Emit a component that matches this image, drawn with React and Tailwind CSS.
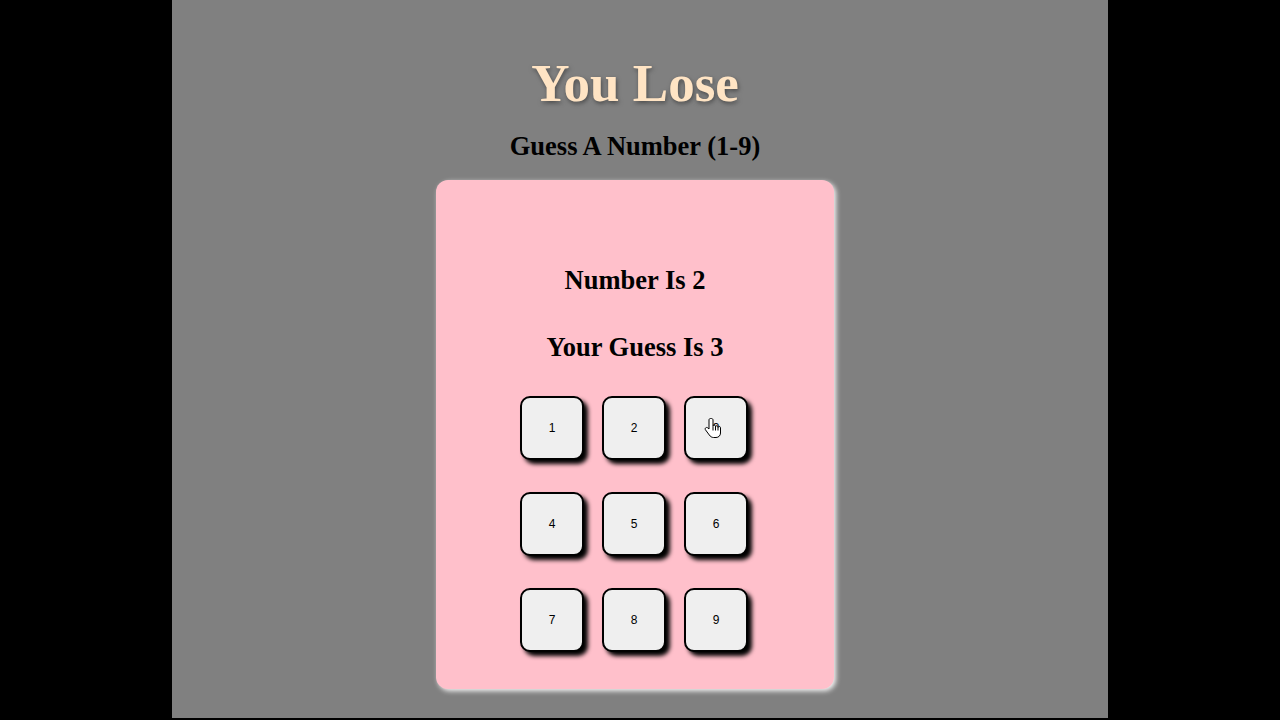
import React from "react";

function HandCursor() {
  return (
    <svg width="18" height="22" viewBox="0 0 18 22" className="absolute left-[532px] top-[417px]">
      <path
        d="M6.5 1.5C5.6 1.5 5 2.1 5 3V12L3.8 10.9C3.1 10.3 2 10.3 1.5 11C1 11.6 1.1 12.4 1.6 13L5.3 18C6.3 19.5 7.8 20.5 9.6 20.5H12C14.6 20.5 16.5 18.6 16.5 16V10.8C16.5 10 15.9 9.4 15.2 9.4C14.5 9.4 14 10 14 10.7V10C14 9.2 13.4 8.7 12.7 8.7C12 8.7 11.5 9.2 11.5 10V9.4C11.5 8.6 10.9 8.1 10.2 8.1C9.5 8.1 9 8.6 9 9.3V3C9 2.1 8.3 1.5 7.5 1.5Z"
        fill="#fff"
        stroke="#000"
        strokeWidth="1"
        strokeLinejoin="round"
      />
      <path d="M9 9.5V13.5M11.5 10V13.5M14 10.7V13.5" stroke="#000" strokeWidth="1" />
    </svg>
  );
}

export default function App() {
  const keys = [1, 2, 3, 4, 5, 6, 7, 8, 9];
  return (
    <div className="w-[1280px] h-[720px] bg-black flex overflow-hidden">
      <div className="w-[172px] shrink-0" />
      <div className="w-[936px] h-[718px] bg-[#808080] shrink-0 relative">
        <div className="w-[926px] flex flex-col items-center font-['Liberation_Serif',serif]">
          <h1 className="mt-[57px] text-[53px] leading-[52px] font-bold text-[#ffe4c4] [text-shadow:1px_2px_4px_#4a4a4a]">
            You Lose
          </h1>
          <h2 className="mt-[22px] text-[26.5px] leading-[30px] font-bold text-black">
            Guess A Number (1-9)
          </h2>
          <div className="mt-[19px] w-[398px] h-[509px] bg-[#ffc0cb] rounded-[12px] shadow-[2px_2px_5px_#f6f6f6] flex flex-col items-center pt-[85px]">
            <p className="text-[26.5px] leading-[30px] font-bold text-black">Number Is 2</p>
            <p className="mt-[37px] text-[26.5px] leading-[30px] font-bold text-black">Your Guess Is 3</p>
            <div className="mt-[34px] ml-[-2px] grid grid-cols-[64px_64px_64px] gap-x-[18px] gap-y-[32px]">
              {keys.map((k) => (
                <button
                  key={k}
                  className="w-[64px] h-[64px] bg-[#efefef] border-2 border-black rounded-[10px] shadow-[4px_4px_4px_#000] text-[12px] text-black font-['Liberation_Sans',Arial,sans-serif]"
                >
                  {k}
                </button>
              ))}
            </div>
          </div>
        </div>
        <HandCursor />
      </div>
    </div>
  );
}
